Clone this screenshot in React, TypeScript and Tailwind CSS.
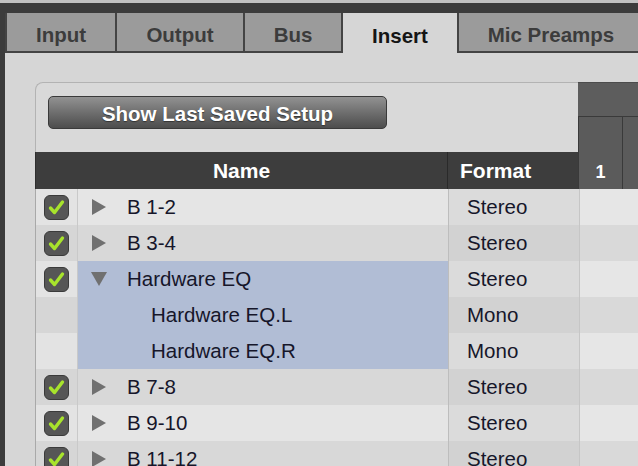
const tabs = [
  { label: "Input", w: "w-[110px]" },
  { label: "Output", w: "w-[128px]" },
  { label: "Bus", w: "w-[98px]" },
  { label: "Insert", w: "w-[116px]", active: true },
  { label: "Mic Preamps", w: "w-[186px]" },
];

interface IRow {
  name: string;
  format: string;
  checked: boolean;
  arrow?: "right" | "down";
  child?: boolean;
  selected?: boolean;
}

const rows: IRow[] = [
  { name: "B 1-2", format: "Stereo", checked: true, arrow: "right" },
  { name: "B 3-4", format: "Stereo", checked: true, arrow: "right" },
  { name: "Hardware EQ", format: "Stereo", checked: true, arrow: "down", selected: true },
  { name: "Hardware EQ.L", format: "Mono", checked: false, child: true, selected: true },
  { name: "Hardware EQ.R", format: "Mono", checked: false, child: true, selected: true },
  { name: "B 7-8", format: "Stereo", checked: true, arrow: "right" },
  { name: "B 9-10", format: "Stereo", checked: true, arrow: "right" },
  { name: "B 11-12", format: "Stereo", checked: true, arrow: "right" },
];

const CheckBox = () => (
  <div className="w-[25px] h-[25px] rounded-[6px] bg-[#565656] border border-[#3a3a3a] flex items-center justify-center">
    <svg width="19" height="19" viewBox="0 0 19 19">
      <polyline
        points="3.5,10 7.5,14.5 15.5,4"
        fill="none"
        stroke="#a8e42c"
        strokeWidth="3.4"
        strokeLinecap="round"
        strokeLinejoin="round"
      />
    </svg>
  </div>
);

const Arrow = ({ dir }: { dir: "right" | "down" }) =>
  dir === "right" ? (
    <svg width="16" height="16" viewBox="0 0 16 16">
      <polygon points="1,0 15,8 1,16" fill="#707070" />
    </svg>
  ) : (
    <svg width="16" height="16" viewBox="0 0 16 16">
      <polygon points="0,1 16,1 8,15" fill="#707070" />
    </svg>
  );

const TableRow = ({ row, index }: { row: IRow; index: number }) => {
  const light = index % 2 === 0;
  return (
    <div className="flex h-[36px] text-[20.5px] text-[#16162a] whitespace-nowrap">
      <div
        className={
          light
            ? "w-[42px] shrink-0 flex items-center justify-center border-r border-[#c9c9c9] bg-[#e3e3e3]"
            : "w-[42px] shrink-0 flex items-center justify-center border-r border-[#c9c9c9] bg-[#d6d6d6]"
        }
      >
        {row.checked && <CheckBox />}
      </div>
      <div
        className={
          row.selected
            ? "w-[370px] shrink-0 flex items-center bg-[#b1bdd5]"
            : light
              ? "w-[370px] shrink-0 flex items-center bg-[#e5e5e5]"
              : "w-[370px] shrink-0 flex items-center bg-[#d8d8d8]"
        }
      >
        {row.child ? (
          <span className="pl-[73px]">{row.name}</span>
        ) : (
          <>
            <span className="pl-[13px] flex items-center">
              <Arrow dir={row.arrow ?? "right"} />
            </span>
            <span className="pl-[20px]">{row.name}</span>
          </>
        )}
      </div>
      <div
        className={
          light
            ? "w-[131px] shrink-0 flex items-center pl-[18px] border-l border-[#bdbdbd] bg-[#dbdbdb]"
            : "w-[131px] shrink-0 flex items-center pl-[18px] border-l border-[#bdbdbd] bg-[#d2d2d2]"
        }
      >
        {row.format}
      </div>
      <div
        className={
          light
            ? "flex-1 border-l border-[#c6c6c6] bg-[#e6e6e6]"
            : "flex-1 border-l border-[#c6c6c6] bg-[#d9d9d9]"
        }
      />
    </div>
  );
};

export default function App() {
  return (
    <div
      className="w-[638px] h-[466px] overflow-hidden bg-[#d6d6d6] flex flex-col"
      style={{ fontFamily: '"Liberation Sans", Arial, sans-serif' }}
    >
      <div className="h-[3px] shrink-0 bg-[#c2c2c2]" />
      <div className="flex flex-1 min-h-0">
        <div className="w-[5px] shrink-0 bg-[#3c3c3c]" />
        <div className="flex-1 min-w-0 flex flex-col">
          <div className="h-[10px] shrink-0 bg-[#3c3c3c]" />
          <div className="h-[40px] shrink-0 flex">
            {tabs.map((tab) => (
              <div
                key={tab.label}
                className={
                  tab.active
                    ? `${tab.w} shrink-0 flex items-center justify-center border-l-2 border-[#444] bg-[#d6d6d6] text-[20.5px] font-bold text-[#151515] pt-[6px] whitespace-nowrap`
                    : `${tab.w} shrink-0 flex items-center justify-center border-l-2 border-b-2 border-[#444] bg-[#9b9b9b] text-[20.5px] font-bold text-[#3c3c3c] pt-[6px] whitespace-nowrap`
                }
              >
                {tab.label}
              </div>
            ))}
          </div>

          <div className="flex-1 pt-[29px] pl-[30px]">
            <div className="flex">
              <div className="w-[543px] shrink-0 h-[70px] rounded-tl-[8px] border-t border-l border-[#b3b3b3] bg-[#d9d9d9] pt-[13px] pl-[12px]">
                <button className="w-[339px] h-[33px] pt-[2px] rounded-[5px] border border-[#3a3a3a] bg-gradient-to-b from-[#929292] to-[#4d4d4d] text-white font-bold text-[20.5px] [text-shadow:0_1px_1px_#333]">
                  Show Last Saved Setup
                </button>
              </div>
              <div className="flex-1 flex flex-col">
                <div className="h-[35px] bg-[#5d5d5d] border-t border-[#4c4c4c] border-b border-b-[#3a3a3a]" />
                <div className="h-[72px] flex bg-[#5b5b5b]">
                  <div className="w-[45px] border-l border-[#3a3a3a] border-r border-r-[#3a3a3a] flex items-end justify-center pb-[3px] text-white font-bold text-[18px]">
                    1
                  </div>
                  <div className="flex-1" />
                </div>
              </div>
            </div>
            <div className="w-[543px] h-[37px] -mt-[37px] flex bg-[#3d3d3d] border-l border-[#2e2e2e] text-white font-bold text-[21px]">
              <div className="w-[411px] flex items-center justify-center">Name</div>
              <div className="w-[131px] flex items-center pl-[12px] border-l border-[#2a2a2a]">Format</div>
            </div>
            <div className="border-l border-[#a9a9a9]">
              {rows.map((row, i) => (
                <TableRow key={row.name} row={row} index={i} />
              ))}
            </div>
          </div>
        </div>
      </div>
    </div>
  );
}
